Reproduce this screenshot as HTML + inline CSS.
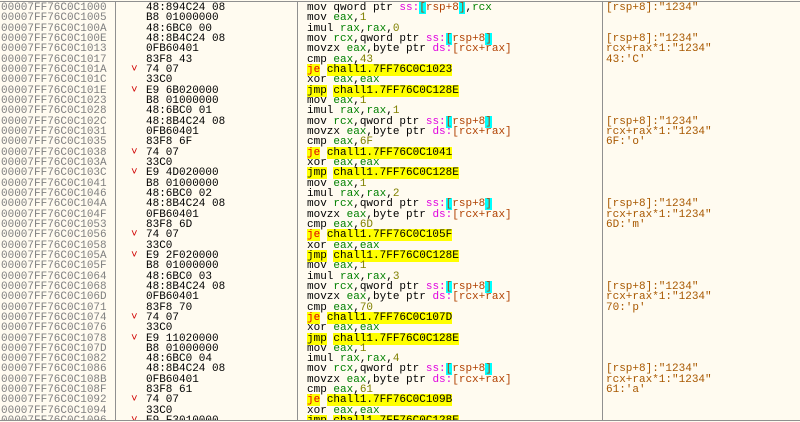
<!DOCTYPE html>
<html><head><meta charset="utf-8"><style>
*{margin:0;padding:0;box-sizing:border-box}
body{width:800px;height:422px;overflow:hidden;background:#fffbf0;font:11px/10.33px "Liberation Mono",monospace;position:relative}
#w{position:absolute;top:1px;left:0;width:800px;height:420px;overflow:hidden;border-top:1px solid #909090;border-bottom:1px solid #909090}
.v{position:absolute;top:0;bottom:0;width:1px;background:#909090}
.r{position:relative;height:10.33px;white-space:pre}
.r span.a{position:absolute;left:1px;color:#808080}
.r span.x{position:absolute;left:131px;color:#d00000}
.r span.b{position:absolute;left:146px;color:#000}
.r span.i{position:absolute;left:307px;color:#000}
.r span.c{position:absolute;left:606px;color:#a85800}
.g{color:#008000}.n{color:#808000}.m{color:#e000e0}.k{background:#00ffff;color:#b04000}.o{color:#b04000}
.y{background:#ffff00}.rd{color:#e00000;background:#ffff00}
</style></head><body><div id="w">
<div class="v" style="left:115px"></div><div class="v" style="left:297px"></div><div class="v" style="left:602px"></div>
<div style="height:1px"></div>
<div class="r"><span class="a">00007FF76C0C1000</span><span class="b">48:894C24 08</span><span class="i">mov qword ptr <span class="m">ss:</span><span class="k">[</span><span class="o">rsp+8</span><span class="k">]</span>,<span class="g">rcx</span></span><span class="c">[rsp+8]:"1234"</span></div>
<div class="r"><span class="a">00007FF76C0C1005</span><span class="b">B8 01000000</span><span class="i">mov <span class="g">eax</span>,<span class="n">1</span></span></div>
<div class="r"><span class="a">00007FF76C0C100A</span><span class="b">48:6BC0 00</span><span class="i">imul <span class="g">rax</span>,<span class="g">rax</span>,<span class="n">0</span></span></div>
<div class="r"><span class="a">00007FF76C0C100E</span><span class="b">48:8B4C24 08</span><span class="i">mov <span class="g">rcx</span>,qword ptr <span class="m">ss:</span><span class="k">[</span><span class="o">rsp+8</span><span class="k">]</span></span><span class="c">[rsp+8]:"1234"</span></div>
<div class="r"><span class="a">00007FF76C0C1013</span><span class="b">0FB60401</span><span class="i">movzx <span class="g">eax</span>,byte ptr <span class="m">ds:</span><span class="o">[rcx+rax]</span></span><span class="c">rcx+rax*1:"1234"</span></div>
<div class="r"><span class="a">00007FF76C0C1017</span><span class="b">83F8 43</span><span class="i">cmp <span class="g">eax</span>,<span class="n">43</span></span><span class="c">43:'C'</span></div>
<div class="r"><span class="a">00007FF76C0C101A</span><span class="x">˅</span><span class="b">74 07</span><span class="i"><span class="rd">je</span> <span class="y">chall1.7FF76C0C1023</span></span></div>
<div class="r"><span class="a">00007FF76C0C101C</span><span class="b">33C0</span><span class="i">xor <span class="g">eax</span>,<span class="g">eax</span></span></div>
<div class="r"><span class="a">00007FF76C0C101E</span><span class="x">˅</span><span class="b">E9 6B020000</span><span class="i"><span class="y">jmp</span> <span class="y">chall1.7FF76C0C128E</span></span></div>
<div class="r"><span class="a">00007FF76C0C1023</span><span class="b">B8 01000000</span><span class="i">mov <span class="g">eax</span>,<span class="n">1</span></span></div>
<div class="r"><span class="a">00007FF76C0C1028</span><span class="b">48:6BC0 01</span><span class="i">imul <span class="g">rax</span>,<span class="g">rax</span>,<span class="n">1</span></span></div>
<div class="r"><span class="a">00007FF76C0C102C</span><span class="b">48:8B4C24 08</span><span class="i">mov <span class="g">rcx</span>,qword ptr <span class="m">ss:</span><span class="k">[</span><span class="o">rsp+8</span><span class="k">]</span></span><span class="c">[rsp+8]:"1234"</span></div>
<div class="r"><span class="a">00007FF76C0C1031</span><span class="b">0FB60401</span><span class="i">movzx <span class="g">eax</span>,byte ptr <span class="m">ds:</span><span class="o">[rcx+rax]</span></span><span class="c">rcx+rax*1:"1234"</span></div>
<div class="r"><span class="a">00007FF76C0C1035</span><span class="b">83F8 6F</span><span class="i">cmp <span class="g">eax</span>,<span class="n">6F</span></span><span class="c">6F:'o'</span></div>
<div class="r"><span class="a">00007FF76C0C1038</span><span class="x">˅</span><span class="b">74 07</span><span class="i"><span class="rd">je</span> <span class="y">chall1.7FF76C0C1041</span></span></div>
<div class="r"><span class="a">00007FF76C0C103A</span><span class="b">33C0</span><span class="i">xor <span class="g">eax</span>,<span class="g">eax</span></span></div>
<div class="r"><span class="a">00007FF76C0C103C</span><span class="x">˅</span><span class="b">E9 4D020000</span><span class="i"><span class="y">jmp</span> <span class="y">chall1.7FF76C0C128E</span></span></div>
<div class="r"><span class="a">00007FF76C0C1041</span><span class="b">B8 01000000</span><span class="i">mov <span class="g">eax</span>,<span class="n">1</span></span></div>
<div class="r"><span class="a">00007FF76C0C1046</span><span class="b">48:6BC0 02</span><span class="i">imul <span class="g">rax</span>,<span class="g">rax</span>,<span class="n">2</span></span></div>
<div class="r"><span class="a">00007FF76C0C104A</span><span class="b">48:8B4C24 08</span><span class="i">mov <span class="g">rcx</span>,qword ptr <span class="m">ss:</span><span class="k">[</span><span class="o">rsp+8</span><span class="k">]</span></span><span class="c">[rsp+8]:"1234"</span></div>
<div class="r"><span class="a">00007FF76C0C104F</span><span class="b">0FB60401</span><span class="i">movzx <span class="g">eax</span>,byte ptr <span class="m">ds:</span><span class="o">[rcx+rax]</span></span><span class="c">rcx+rax*1:"1234"</span></div>
<div class="r"><span class="a">00007FF76C0C1053</span><span class="b">83F8 6D</span><span class="i">cmp <span class="g">eax</span>,<span class="n">6D</span></span><span class="c">6D:'m'</span></div>
<div class="r"><span class="a">00007FF76C0C1056</span><span class="x">˅</span><span class="b">74 07</span><span class="i"><span class="rd">je</span> <span class="y">chall1.7FF76C0C105F</span></span></div>
<div class="r"><span class="a">00007FF76C0C1058</span><span class="b">33C0</span><span class="i">xor <span class="g">eax</span>,<span class="g">eax</span></span></div>
<div class="r"><span class="a">00007FF76C0C105A</span><span class="x">˅</span><span class="b">E9 2F020000</span><span class="i"><span class="y">jmp</span> <span class="y">chall1.7FF76C0C128E</span></span></div>
<div class="r"><span class="a">00007FF76C0C105F</span><span class="b">B8 01000000</span><span class="i">mov <span class="g">eax</span>,<span class="n">1</span></span></div>
<div class="r"><span class="a">00007FF76C0C1064</span><span class="b">48:6BC0 03</span><span class="i">imul <span class="g">rax</span>,<span class="g">rax</span>,<span class="n">3</span></span></div>
<div class="r"><span class="a">00007FF76C0C1068</span><span class="b">48:8B4C24 08</span><span class="i">mov <span class="g">rcx</span>,qword ptr <span class="m">ss:</span><span class="k">[</span><span class="o">rsp+8</span><span class="k">]</span></span><span class="c">[rsp+8]:"1234"</span></div>
<div class="r"><span class="a">00007FF76C0C106D</span><span class="b">0FB60401</span><span class="i">movzx <span class="g">eax</span>,byte ptr <span class="m">ds:</span><span class="o">[rcx+rax]</span></span><span class="c">rcx+rax*1:"1234"</span></div>
<div class="r"><span class="a">00007FF76C0C1071</span><span class="b">83F8 70</span><span class="i">cmp <span class="g">eax</span>,<span class="n">70</span></span><span class="c">70:'p'</span></div>
<div class="r"><span class="a">00007FF76C0C1074</span><span class="x">˅</span><span class="b">74 07</span><span class="i"><span class="rd">je</span> <span class="y">chall1.7FF76C0C107D</span></span></div>
<div class="r"><span class="a">00007FF76C0C1076</span><span class="b">33C0</span><span class="i">xor <span class="g">eax</span>,<span class="g">eax</span></span></div>
<div class="r"><span class="a">00007FF76C0C1078</span><span class="x">˅</span><span class="b">E9 11020000</span><span class="i"><span class="y">jmp</span> <span class="y">chall1.7FF76C0C128E</span></span></div>
<div class="r"><span class="a">00007FF76C0C107D</span><span class="b">B8 01000000</span><span class="i">mov <span class="g">eax</span>,<span class="n">1</span></span></div>
<div class="r"><span class="a">00007FF76C0C1082</span><span class="b">48:6BC0 04</span><span class="i">imul <span class="g">rax</span>,<span class="g">rax</span>,<span class="n">4</span></span></div>
<div class="r"><span class="a">00007FF76C0C1086</span><span class="b">48:8B4C24 08</span><span class="i">mov <span class="g">rcx</span>,qword ptr <span class="m">ss:</span><span class="k">[</span><span class="o">rsp+8</span><span class="k">]</span></span><span class="c">[rsp+8]:"1234"</span></div>
<div class="r"><span class="a">00007FF76C0C108B</span><span class="b">0FB60401</span><span class="i">movzx <span class="g">eax</span>,byte ptr <span class="m">ds:</span><span class="o">[rcx+rax]</span></span><span class="c">rcx+rax*1:"1234"</span></div>
<div class="r"><span class="a">00007FF76C0C108F</span><span class="b">83F8 61</span><span class="i">cmp <span class="g">eax</span>,<span class="n">61</span></span><span class="c">61:'a'</span></div>
<div class="r"><span class="a">00007FF76C0C1092</span><span class="x">˅</span><span class="b">74 07</span><span class="i"><span class="rd">je</span> <span class="y">chall1.7FF76C0C109B</span></span></div>
<div class="r"><span class="a">00007FF76C0C1094</span><span class="b">33C0</span><span class="i">xor <span class="g">eax</span>,<span class="g">eax</span></span></div>
<div class="r"><span class="a">00007FF76C0C1096</span><span class="x">˅</span><span class="b">E9 F3010000</span><span class="i"><span class="y">jmp</span> <span class="y">chall1.7FF76C0C128E</span></span></div>
</div></body></html>
